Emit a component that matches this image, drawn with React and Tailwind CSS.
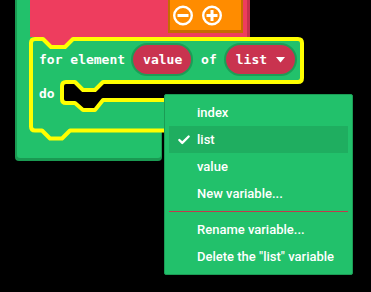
import { Check } from "lucide-react";

const GREEN = "#22c16b";

const menuItems = [
  { label: "index" },
  { label: "list", checked: true },
  { label: "value" },
  { label: "New variable..." },
];

const menuActions = ["Rename variable...", "Delete the \"list\" variable"];

const Pill = ({ children, className = "" }) => (
  <div
    className={`flex h-[33px] items-center rounded-full border-2 border-[#1c9d56] bg-[#c9334f] ${className}`}
  >
    {children}
  </div>
);

const Blocks = () => (
  <svg
    className="absolute inset-0"
    width="371"
    height="292"
    viewBox="0 0 371 292"
  >
    {/* outer loop block */}
    <rect x="15" y="-10" width="147" height="171" rx="4" fill="#1a9a52" />
    <rect x="17" y="-10" width="144" height="168" rx="3" fill={GREEN} />

    {/* array block */}
    <rect x="30" y="-10" width="220" height="47" fill="#c52f4c" />
    <rect x="30" y="-10" width="217" height="47" fill="#ee3d5e" />
    <path d="M43 36 L51 46 L65 46 L73 36 Z" fill="#ee3d5e" />

    {/* mutator */}
    <rect x="168" y="-10" width="75" height="43" fill="#c56c00" />
    <rect x="170" y="-10" width="71" height="40" fill="#ff8c00" />
    <circle cx="183" cy="15.5" r="8.8" fill="none" stroke="#fff" strokeWidth="2.4" />
    <rect x="177.5" y="14" width="11" height="3" fill="#fff" />
    <circle cx="212" cy="15.5" r="8.8" fill="none" stroke="#fff" strokeWidth="2.4" />
    <rect x="206.5" y="14" width="11" height="3" fill="#fff" />
    <rect x="210.5" y="10" width="3" height="11" fill="#fff" />

    {/* empty statement slot */}
    <path d="M60 80 L240 80 L240 101 L103 101 L95 111 L83 111 L75 104 L60 104 Z" fill="#000" />

    {/* for element block, selected */}
    <path
      d="M31 43 Q31 39 35 39 L43 39 L51 47 L65 47 L73 39 L298 39 Q302 39 302 43 L302 78 Q302 82 298 82 L103 82 L95 90 L83 90 L75 82 L66 82 Q62 82 62 86 L62 99 Q62 103 66 103 L75 103 L83 110 L95 110 L103 100 L220 100 L220 130.5 L70 130.5 L62 138.5 L50 138.5 L42 130.5 L35 130.5 Q31 130.5 31 126.5 Z"
      fill={GREEN}
      stroke="#ffff00"
      strokeWidth="4"
      strokeLinejoin="round"
    />
  </svg>
);

const BlockText = () => (
  <div className="absolute inset-0 font-['DejaVu_Sans_Mono',monospace] text-[13px] font-bold text-white">
    <div className="absolute left-[39px] top-[43px] flex items-center">
      <span>for element</span>
      <Pill className="ml-[6px] w-[62px] pl-[10px]">value</Pill>
      <span className="ml-[8px]">of</span>
      <Pill className="ml-[7px] w-[73px] pl-[10px]">
        list
        <svg className="ml-[9px]" width="9" height="6" viewBox="0 0 9 6">
          <path d="M0 0 L9 0 L4.5 5.5 Z" fill="#fff" />
        </svg>
      </Pill>
    </div>
    <div className="absolute left-[39px] top-[84px]">do</div>
  </div>
);

const VariableMenu = () => (
  <div className="absolute left-[164px] top-[94px] w-[189px] rounded-[2px] border border-[#1b9c55] bg-[#22c16b] px-[4px] py-[4px] font-['Roboto',sans-serif] text-[13px] font-medium text-white">
    {menuItems.map((item) => (
      <div
        key={item.label}
        className={`flex h-[27px] items-center ${item.checked ? "bg-[#1fae60]" : ""}`}
      >
        <span className="flex w-[28px] justify-center pl-[2px]">
          {item.checked && <Check size={14} strokeWidth={4} />}
        </span>
        <span>{item.label}</span>
      </div>
    ))}
    <div className="my-[4px] h-px bg-[#c23a4d]" />
    {menuActions.map((label) => (
      <div key={label} className="flex h-[27px] items-center pl-[28px]">
        {label}
      </div>
    ))}
  </div>
);

export default function App() {
  return (
    <div className="relative h-[292px] w-[371px] overflow-hidden bg-black">
      <Blocks />
      <BlockText />
      <VariableMenu />
    </div>
  );
}
